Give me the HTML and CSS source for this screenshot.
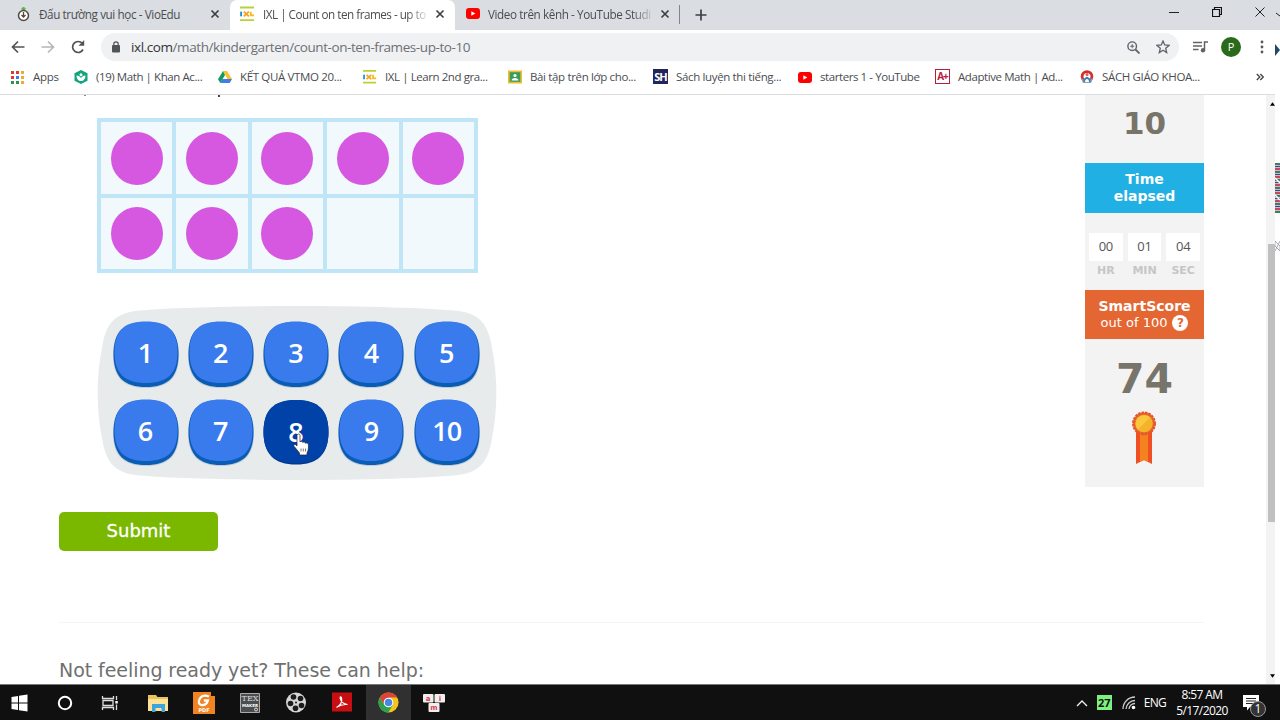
FILE: index.html
```html
<!DOCTYPE html>
<html lang="vi">
<head>
    <meta charset="UTF-8">
    <meta name="viewport" content="width=device-width, initial-scale=1.0">
    <title>IXL | Count on ten frames - up to 10</title>
    <link rel="stylesheet" href="styles.css">
</head>
<body>
    <!-- shared icons -->
    <svg class="defs" width="0" height="0">
        <symbol id="x" viewBox="0 0 10 10"><path d="M1.5 1.5l7 7M8.5 1.5l-7 7" stroke="#3c4043" stroke-width="1.7"/></symbol>
        <symbol id="ixl" viewBox="0 0 16 16">
            <path d="M0 0h15v2H0zM0 13.5h15v2H0z" fill="#b5d334"/>
            <path d="M1.2 5.500v5" stroke="#1c8fd0" stroke-width="2"/>
            <path d="M4 5.500l5.500 5M9.500 5.500L4 10.500" stroke="#f9a11b" stroke-width="2"/>
            <path d="M11.500 5.500v4h3.500" stroke="#f9b91b" stroke-width="2" fill="none"/>
        </symbol>
        <symbol id="yt" viewBox="0 0 14 12"><rect width="14" height="11" rx="3" fill="#f00"/><path d="M5.3 3.2v4.6l4-2.3z" fill="#fff"/></symbol>
        <symbol id="key" viewBox="0 0 66 68">
            <path d="M33 3C57 3 66 14 66 35C66 57 55 67 33 67S0 57 0 35C0 14 9 3 33 3z" fill="#c5cdd4"/>
            <path d="M33 1C56 1 65.500 11 65.500 33C65.500 56 55 66 33 66S.5 56 .5 33C.5 11 10 1 33 1z" fill="#0a5db5"/>
            <path d="M33 .5C55 .5 64.500 10 64.500 31C64.500 52 55 62 33 62S1.500 52 1.500 31C1.500 10 11 .5 33 .5z" fill="#397aec"/>
        </symbol>
        <symbol id="key-down" viewBox="0 0 66 68">
            <path d="M33 1C55 1 65.500 11 65.500 33C65.500 55 55 65.500 33 65.500S.5 55 .5 33C.5 11 11 1 33 1z" fill="#003a8c"/>
            <path d="M33 1C55 1 65.500 11 65.500 33C65.500 54 55 64 33 64S.5 54 .5 33C.5 11 11 1 33 1z" fill="#0142a8"/>
        </symbol>
    </svg>

    <div class="screen">
        <div class="browser">
            <div class="tabs">
                <div class="tab first">
                    <svg class="fav" viewBox="0 0 14 16"><path d="M7 1l-2 2 2 1.500L9 3z" fill="#5fb446" stroke="#5fb446"/><circle cx="7" cy="9.500" r="5" fill="#fff" stroke="#55493d" stroke-width="1.500"/><path d="M7 6v4M5 9l2 2 2-2" stroke="#55493d" stroke-width="1.300" fill="none"/></svg>
                    <span class="title t1">Đấu trường vui học - VioEdu</span>
                    <svg class="close"><use href="#x"/></svg>
                </div>
                <div class="tab active">
                    <svg class="fav"><use href="#ixl"/></svg>
                    <span class="title t2">IXL | Count on ten frames - up to</span>
                    <svg class="close"><use href="#x"/></svg>
                </div>
                <div class="tab third">
                    <svg class="fav yt"><use href="#yt"/></svg>
                    <span class="title t3">Video trên kênh - YouTube Studi</span>
                    <svg class="close"><use href="#x"/></svg>
                </div>
                <svg class="plus" viewBox="0 0 12 12"><path d="M6 .5v11M.5 6h11" stroke="#3c4043" stroke-width="1.700"/></svg>
                <div class="window-buttons">
                    <svg width="10" height="12" viewBox="0 0 10 12"><path d="M0 6.500h10" stroke="#222"/></svg>
                    <svg width="10" height="12" viewBox="0 0 10 12"><path d="M.5 3.500h7v7h-7zM2.500 3.500v-2h7v7h-2" fill="none" stroke="#111" stroke-width="1.200"/></svg>
                    <svg width="10" height="12" viewBox="0 0 10 12"><path d="M.5 1.500l9 9M9.500 1.500l-9 9" stroke="#222"/></svg>
                </div>
            </div>

            <div class="toolbar">
                <svg class="nav" viewBox="0 0 14 14"><path d="M13.500 7H1.500M7 1.500L1.500 7 7 12.500" fill="none" stroke="#505357" stroke-width="1.700"/></svg>
                <svg class="nav" viewBox="0 0 14 14"><path d="M.5 7h12M7 1.500L12.500 7 7 12.500" fill="none" stroke="#b4b6b9" stroke-width="1.600"/></svg>
                <svg class="nav" viewBox="0 0 14 14"><path d="M12 9.500A5.500 5.500 0 1 1 11.200 3.300L12 4.300" fill="none" stroke="#505357" stroke-width="1.700"/><path d="M13.200 0v5.800H7.500z" fill="#505357"/></svg>
                <div class="address">
                    <svg class="lock" viewBox="0 0 8 12"><rect y="4" width="8" height="7.500" rx="1" fill="#505357"/><path d="M1.800 4.500V3a2.200 2.200 0 0 1 4.400 0v1.500" fill="none" stroke="#505357" stroke-width="1.200"/></svg>
                    <span class="url"><b>ixl.com</b>/math/kindergarten/count-on-ten-frames-up-to-10</span>
                    <svg class="zoom" viewBox="0 0 13 13"><circle cx="5.200" cy="5.200" r="4.300" fill="none" stroke="#5f6368" stroke-width="1.400"/><path d="M8.500 8.500l4 4" stroke="#5f6368" stroke-width="1.800"/><path d="M3.200 5.200h4M5.200 3.200v4" stroke="#5f6368"/></svg>
                    <svg class="star" viewBox="0 0 14 14"><path d="M7 1l1.700 4 4.300.4-3.300 2.800 1 4.300L7 10.200l-3.700 2.300 1-4.300L1 5.400 5.300 5z" fill="none" stroke="#5f6368" stroke-width="1.300"/></svg>
                </div>
                <svg class="music" viewBox="0 0 15 12"><path d="M0 1.500h9M0 5h9M0 8.500h5.500M11.500 9V1H15" fill="none" stroke="#5f6368" stroke-width="1.500"/><circle cx="10" cy="9.300" r="2.200" fill="#5f6368"/></svg>
                <span class="avatar">P</span>
                <svg class="dots" viewBox="0 0 4 14"><circle cx="2" cy="2" r="1.400"/><circle cx="2" cy="7" r="1.400"/><circle cx="2" cy="12" r="1.400"/></svg>
            </div>

            <div class="bookmarks">
                <div class="bm b0"><svg viewBox="0 0 14 14"><path d="M1 1h3v3H1zM1 6h3v3H1z" fill="#df3a2f"/><path d="M6 1h3v3H6z" fill="#df3a2f"/><path d="M11 1h3v3h-3zM11 6h3v3h-3z" fill="#f0aa32"/><path d="M6 6h3v3H6z" fill="#3b7ee8"/><path d="M1 11h3v3H1zM6 11h3v3H6z" fill="#26964d"/><path d="M11 11h3v3h-3z" fill="#f0aa32"/></svg><span>Apps</span></div>
                <div class="bm b1"><svg viewBox="0 0 14 14"><path d="M7 0l6.500 3.300v7.400L7 14 .5 10.700V3.300z" fill="#14a37f"/><circle cx="7" cy="4.700" r="1.500" fill="#fff"/><path d="M2.500 5.500c2 0 3.500 1 4.500 2.500 1-1.500 2.500-2.500 4.500-2.500 0 3.500-2 5.500-4.500 5.500S2.500 9 2.500 5.500z" fill="#fff"/></svg><span>(19) Math | Khan Ac...</span></div>
                <div class="bm b2"><svg viewBox="0 0 14 14"><path d="M5 1h4l5 8H9.500z" fill="#fbc02d"/><path d="M5 1L0 9.300 2.300 13 7 5z" fill="#149b58"/><path d="M4.500 9H14l-2.300 4H2.300z" fill="#3f7de8"/></svg><span>KẾT QUẢ VTMO 20...</span></div>
                <div class="bm b3"><svg><use href="#ixl"/></svg><span>IXL | Learn 2nd gra...</span></div>
                <div class="bm b4"><svg viewBox="0 0 14 14"><path d="M0 .5h14v13H0z" fill="#f0bc2e"/><path d="M1.700 2.200h10.600v9.600H1.700z" fill="#379c5c"/><circle cx="7" cy="5.500" r="1.600" fill="#fff"/><path d="M3.500 10.500c0-3.500 7-3.500 7 0z" fill="#fff"/></svg><span>Bài tập trên lớp cho...</span></div>
                <div class="bm b5"><b class="sh">SH</b><span>Sách luyện thi tiếng...</span></div>
                <div class="bm b6"><svg viewBox="0 -1 14 12"><use href="#yt" width="14" height="12"/></svg><span>starters 1 - YouTube</span></div>
                <div class="bm b7"><b class="aplus">A+</b><span>Adaptive Math | Ad...</span></div>
                <div class="bm b8"><svg viewBox="0 0 14 14"><circle cx="7" cy="6.500" r="6.300" fill="#d32d2c"/><path d="M1 8l2 5h8l2-5-6 3z" fill="#8d9fb0"/><circle cx="7" cy="6.500" r="3.500" fill="#fff"/><path d="M3.500 12V9L7 6.500 10.500 9v3z" fill="#3d7eb8"/><path d="M5 12c0-4 4-4 4 0z" fill="#fff"/><circle cx="7" cy="4.500" r="1.500" fill="#e95c40"/></svg><span>SÁCH GIÁO KHOA...</span></div>
                <svg class="more" viewBox="0 0 8 8"><path d="M.8 1l3 3-3 3M4.300 1l3 3-3 3" fill="none" stroke="#444" stroke-width="1.300"/></svg>
            </div>

            <div class="page">
                <main>
                    <div class="heading-tail"><i></i><i></i></div>
                    <div class="ten-frame">
                        <div><i></i></div><div><i></i></div><div><i></i></div><div><i></i></div><div><i></i></div>
                        <div><i></i></div><div><i></i></div><div><i></i></div><div></div><div></div>
                    </div>
                    <div class="keypad">
                        <svg class="pad" viewBox="0 0 400 176"><path d="M200 1C265 1 335 3 362 6C383 9 391 20 394.500 40C401 72 401 104 394.500 136C391 156 383 167 362 170C335 173 265 175 200 175S65 173 38 170C17 167 9 156 5.500 136C-1 104-1 72 5.500 40C9 20 17 9 38 6C65 3 135 1 200 1z" fill="#e8ebec"/></svg>
                        <button><svg><use href="#key"/></svg><span>1</span></button>
                        <button><svg><use href="#key"/></svg><span>2</span></button>
                        <button><svg><use href="#key"/></svg><span>3</span></button>
                        <button><svg><use href="#key"/></svg><span>4</span></button>
                        <button><svg><use href="#key"/></svg><span>5</span></button>
                        <button><svg><use href="#key"/></svg><span>6</span></button>
                        <button><svg><use href="#key"/></svg><span>7</span></button>
                        <button class="pressed"><svg><use href="#key-down"/></svg><span>8</span>
                            <svg class="cursor" viewBox="0 0 17 23"><path d="M4 2.500C4 .5 7 .5 7 2.500V9c.5-1 2.500-.8 2.800.5.8-.8 2.400-.5 2.700.8.900-.6 2.700-.2 2.900 1.200.2 3 .1 6-1.400 8.500V22H6.500v-2C4.500 17.500 3 15.500 1 13.300.2 12 1.500 10.800 2.800 11.700L4 13z" fill="#fff" stroke="#223" stroke-width=".7"/><path d="M8 15.500v3M10.300 15.500v3M12.500 15.500v3" stroke="#222" stroke-width=".6"/></svg>
                        </button>
                        <button><svg><use href="#key"/></svg><span>9</span></button>
                        <button class="ten"><svg><use href="#key"/></svg><span>10</span></button>
                    </div>
                    <button class="submit">Submit</button>
                </main>

                <aside>
                    <div class="answered">10</div>
                    <div class="label time">Time<br>elapsed</div>
                    <div class="timer">
                        <div><b>00</b><span>HR</span></div>
                        <div><b>01</b><span>MIN</span></div>
                        <div><b>04</b><span>SEC</span></div>
                    </div>
                    <div class="label smart">SmartScore<small>out of 100 <i>?</i></small></div>
                    <div class="score">74</div>
                    <svg class="ribbon" viewBox="0 0 26 54"><path d="M5 20h16v33l-8-4-8 4z" fill="#f04e23"/><path d="M9 22h8v29l-4-2-4 2z" fill="#f58220"/><circle cx="13" cy="12.500" r="11" fill="#e9642c" stroke="#e2572b" stroke-width="2" stroke-dasharray="2.500 1"/><circle cx="13" cy="12.500" r="8.800" fill="#f4b329"/><path d="M6.800 18.700A8.800 8.800 0 0 1 19.200 6.300z" fill="#fac73f"/></svg>
                </aside>

                <div class="help">Not feeling ready yet? These can help:</div>

                <div class="scrollbar">
                    <svg viewBox="0 0 6 4"><path d="M0 4l3-4 3 4z"/></svg>
                    <div class="thumb"></div>
                    <svg viewBox="0 0 6 4"><path d="M0 0l3 4 3-4z"/></svg>
                </div>
            </div>
        </div>

        <!-- sliver of the window behind -->
        <div class="behind">
            <svg viewBox="0 0 5 684" width="5" height="684">
                <path d="M0 0h5v30H0z" fill="#dadde1"/>
                <path d="M1 13l4 3" stroke="#222"/>
                <path d="M0 44l5 6-5 6z" fill="#20486d"/>
                <path d="M0 163h5v50H0z" fill="#c9b9c9"/>
                <path d="M2.500 163v50" stroke="#39805f" stroke-width="5" stroke-dasharray="2 6"/>
                <path d="M2.500 166v47" stroke="#384a86" stroke-width="5" stroke-dasharray="1 7"/>
                <path d="M2.500 168v45" stroke="#c64762" stroke-width="5" stroke-dasharray="2 6"/>
                <path d="M0 178l5 5M0 195l5 5" stroke="#fff" stroke-width="1.500"/>
                <path d="M0 241l5 5v5l-5-5zM5 241l-5 10" stroke="#889" stroke-width=".7" fill="none"/>
            </svg>
        </div>
    </div>

    <div class="taskbar">
        <svg viewBox="0 0 24 24"><path d="M4.500 6l6.500-1v6.500H4.500zM12 4.800L20.500 3.500v8H12zM4.500 12.500H11V19l-6.500-1zM12 12.500h8.500v8L12 19.200z" fill="#fff"/></svg>
        <svg viewBox="0 0 24 24"><circle cx="12" cy="12" r="6.200" fill="none" stroke="#fff" stroke-width="2"/></svg>
        <svg viewBox="0 0 24 24"><path d="M3.500 5v2.500h11V5M3.500 19v-2.500h11V19M4 9.500h10v5H4zM17.500 5v4M17.500 13.500V19" fill="none" stroke="#ddd" stroke-width="1.300"/><path d="M16.300 10h2.500v2.500h-2.500z" fill="#fff"/></svg>
        <svg viewBox="0 0 24 24"><path d="M2 4h8l1.500 2H22v14H2z" fill="#e9c35b"/><path d="M2 8h20v12H2z" fill="#fbe296"/><path d="M6 13h13v8h-3.500v-4h-6v4H6z" fill="#3ca3dc"/></svg>
        <svg viewBox="0 0 24 24"><path d="M1 1h18l4 4v18H1z" fill="#f08322"/><path d="M19 0v5h5z" fill="#111"/><path d="M17 5.500c-6-2.500-9 .5-10 4-.8 3 1 5 4 4.500 3-.3 4.300-2 4.800-4.500h-4" fill="none" stroke="#fff" stroke-width="2.300"/><text x="12" y="21" class="tiny">PDF</text></svg>
        <svg viewBox="0 0 24 24"><path d="M2.500 2.500h19v19h-19z" fill="#4b4d4f" stroke="#aaa"/><text x="12" y="10" class="tex">TEX</text><text x="12" y="16" class="tiny maker">MAKER</text><circle cx="18" cy="18.500" r="1.500" fill="none" stroke="#ddd"/></svg>
        <svg viewBox="0 0 24 24"><circle cx="12" cy="11.500" r="10" fill="#d5d5d5"/><g fill="#1b1b1b"><circle cx="9.500" cy="6" r="2.800"/><circle cx="16.500" cy="7.500" r="2.800"/><circle cx="6.500" cy="12.500" r="2.800"/><circle cx="11.500" cy="17.200" r="2.800"/><circle cx="17.500" cy="14.500" r="2.800"/><circle cx="12" cy="11.500" r="1"/></g></svg>
        <svg viewBox="0 0 24 24"><path d="M2 1.500h20v19H2z" fill="#c90e12"/><path d="M6.500 16.500c4-2 6-6 5-9.500-.3-1.500-1.600-1.500-1.300.3.800 3.500 3.300 5.700 7.300 6.200M7 16c3-2 6.500-3 10.500-2.500" fill="none" stroke="#fff" stroke-width="1.200"/></svg>
        <div class="running"><svg viewBox="0 0 24 24"><circle cx="12" cy="12" r="10.500" fill="#f4c51d"/><path d="M2.900 6.800A10.500 10.500 0 0 1 21.100 6.800H12L7.500 14.600z" fill="#dc4437"/><path d="M2.900 6.800A10.500 10.500 0 0 0 11.800 22.500L16.500 14.600 12 17 7.500 14.600z" fill="#2da04f"/><circle cx="12" cy="12" r="5" fill="#fff"/><circle cx="12" cy="12" r="3.900" fill="#4a86e8"/></svg></div>
        <svg class="keys" viewBox="0 0 24 24"><g fill="#f3eeee"><rect x="1" y="3" width="10.500" height="8.500" rx="1"/><rect x="12.500" y="3" width="10.500" height="8.500" rx="1"/><rect x="6.500" y="12" width="11" height="9" rx="1"/></g><g class="cap"><text x="6" y="9.500">a</text><text x="18" y="9.500">i</text><text x="12" y="19">m</text></g></svg>
        <div class="tray">
            <svg class="up" viewBox="0 0 12 8"><path d="M1 7l5-5 5 5" fill="none" stroke="#eee" stroke-width="1.400"/></svg>
            <span class="temp">27</span>
            <svg class="wifi" viewBox="0 0 14 14"><path d="M1 13A12 12 0 0 1 13 1M4 13A9 9 0 0 1 13 4.500M7 13a6 6 0 0 1 6-5.500" fill="none" stroke="#ccc" stroke-width="1.300"/><circle cx="11.500" cy="11.500" r="1.800" fill="#fff"/></svg>
            <span class="lang">ENG</span>
            <div class="clock"><span>8:57 AM</span><span>5/17/2020</span></div>
            <div class="notes">
                <svg viewBox="0 0 16 16"><path d="M0 0h16v12H7l-3 3.500V12H0z" fill="#fff"/><path d="M3 3.500h10M3 6h10M3 8.500h7" stroke="#222"/></svg>
                <span class="badge">1</span>
            </div>
        </div>
    </div>
</body>
</html>
```

FILE: styles.css
```css
* {
    box-sizing: border-box;
}
body {
    margin: 0;
    width: 1280px;
    height: 720px;
    overflow: hidden;
    background: #fff;
    font-family: "Open Sans", "Noto Sans", sans-serif;
}
svg {
    display: block;
    flex: none;
}
button {
    border: none;
    padding: 0;
    background: none;
    cursor: pointer;
}
.defs {
    position: absolute;
}
.screen {
    display: flex;
    height: 684px;
}
.browser {
    width: 1275px;
    display: flex;
    flex-direction: column;
}
.behind {
    width: 5px;
}

/* tabs */
.tabs {
    height: 30px;
    background: #dadde1;
    display: flex;
    align-items: center;
}
.tab {
    display: flex;
    align-items: center;
    height: 30px;
    padding: 0 10px 2px 0;
    color: #4a4d51;
    font-size: 11.7px;
}
.tab.first {
    width: 230px;
    padding-left: 16px;
}
.tab.active {
    width: 225px;
    padding-left: 10px;
    background: #fff;
    border-radius: 7px 7px 0 0;
}
.tab.third {
    width: 225px;
    padding-left: 11px;
    background: linear-gradient(#80868b, #80868b) right 0 top 5px / 1px 19px no-repeat;
}
.fav {
    width: 15px;
    height: 16px;
    margin-right: 8px;
}
.fav.yt {
    width: 14px;
    height: 12px;
}
.title {
    flex: 1;
    white-space: nowrap;
    margin-right: 8px;
}
.t2, .t3 {
    -webkit-mask-image: linear-gradient(to right, #000 88%, transparent 102%);
    mask-image: linear-gradient(to right, #000 88%, transparent 102%);
}
.t1 {
    letter-spacing: -0.4px;
}
.t2 {
    letter-spacing: -0.5px;
}
.t3 {
    letter-spacing: -0.4px;
}
.close {
    width: 10px;
    height: 10px;
}
.plus {
    width: 12px;
    height: 12px;
    margin-left: 15px;
    margin-top: -1px;
}
.window-buttons {
    margin-left: auto;
    margin-right: 10px;
    margin-top: -7px;
    display: flex;
    gap: 33px;
}

/* toolbar */
.toolbar {
    height: 34px;
    display: flex;
    align-items: center;
    padding: 0 11px;
}
.nav {
    width: 14px;
    height: 14px;
    margin-right: 16px;
}
.address {
    width: 1080px;
    height: 28px;
    border-radius: 14px;
    background: #f0f1f3;
    display: flex;
    align-items: center;
    padding: 0 9px 0 11px;
    font-size: 13.5px;
    color: #6c7074;
}
.lock {
    width: 8px;
    height: 12px;
    margin-right: 11px;
}
.url {
    letter-spacing: -0.42px;
}
.url b {
    font-weight: normal;
    color: #303336;
}
.zoom {
    width: 13px;
    height: 13px;
    margin-left: auto;
    margin-right: 16px;
}
.star {
    width: 14px;
    height: 14px;
}
.music {
    width: 15px;
    height: 12px;
    margin-left: 14px;
}
.avatar {
    width: 20px;
    height: 20px;
    border-radius: 50%;
    background: #2a6a1a;
    color: #fff;
    font-size: 11px;
    line-height: 20px;
    text-align: center;
    margin-left: 13px;
}
.dots {
    width: 4px;
    height: 14px;
    margin-left: 19px;
    fill: #55585c;
}

/* bookmarks */
.bookmarks {
    height: 31px;
    padding-bottom: 5px;
    border-bottom: 1px solid #dcdddf;
    display: flex;
    align-items: center;
    font-size: 11.5px;
    color: #4a4d51;
}
.bm {
    display: flex;
    align-items: center;
    gap: 8px;
    white-space: nowrap;
    letter-spacing: -0.42px;
}
.bm svg {
    width: 14px;
    height: 14px;
}
.b0 {
    width: 64px;
    margin-left: 10px;
    gap: 9px;
    letter-spacing: -0.3px;
}
.b1, .b2, .b3, .b4, .b5, .b7 {
    width: 145px;
}
.b2, .b4, .b5, .b8 {
    letter-spacing: -0.35px;
}
.b1 {
    width: 144px;
}
.b6 {
    width: 137px;
}
.b8 {
    width: 140px;
}
.sh, .aplus {
    width: 15px;
    height: 15px;
    line-height: 15px;
    text-align: center;
    font-size: 11px;
    letter-spacing: -1px;
    background: #22255a;
    color: #fff;
}
.aplus {
    line-height: 12px;
    font-size: 10px;
    background: #fff;
    color: #b51f3f;
    border: 1px solid #b51f3f;
}
.more {
    width: 8px;
    height: 8px;
    margin-left: 36px;
}

/* page */
.page {
    flex: 1;
    display: grid;
    grid-template-columns: 1026px 119px 62px 9px;
    grid-template-rows: 527px 62px;
    padding-left: 59px;
    overflow: hidden;
    font-family: "DejaVu Sans", sans-serif;
}
.heading-tail {
    height: 23px;
    display: flex;
    padding-left: 25px;
    gap: 132px;
}
.heading-tail i {
    width: 2px;
    height: 2px;
    background: #444;
}
.heading-tail i:first-child {
    height: 1px;
    background: #888;
}
.ten-frame {
    width: 381px;
    height: 155px;
    margin-left: 38px;
    padding: 4px;
    display: grid;
    grid-template-columns: repeat(5, 1fr);
    grid-template-rows: repeat(2, 1fr);
    gap: 4px;
    background: #bfe5f6;
}
.ten-frame div {
    background: #f1f9fd;
    display: flex;
    align-items: center;
    justify-content: center;
}
.ten-frame i {
    width: 52px;
    height: 53px;
    margin-top: 1px;
    border-radius: 50%;
    background: #d658e0;
}
.keypad {
    position: relative;
    width: 400px;
    height: 176px;
    margin: 32px 0 0 38px;
    padding: 16px 15px 0 15.5px;
    display: grid;
    grid-template-columns: repeat(5, 66px);
    grid-template-rows: repeat(2, 68px);
    column-gap: 9.3px;
    row-gap: 9.5px;
}
.pad {
    position: absolute;
    inset: 0;
}
.keypad button {
    position: relative;
    display: grid;
    color: #fff;
    font: 600 27px/63px "Open Sans", sans-serif;
}
.keypad button > svg:first-child {
    grid-area: 1 / 1;
    width: 66px;
    height: 68px;
}
.keypad button span {
    grid-area: 1 / 1;
    z-index: 1;
}
.keypad .pressed span {
    line-height: 66px;
}
.keypad .ten {
    letter-spacing: -1px;
}
.cursor {
    position: absolute;
    left: 30px;
    top: 34px;
    width: 17px;
    height: 23px;
    z-index: 2;
}
.submit {
    display: block;
    width: 159px;
    height: 39px;
    margin-top: 31px;
    padding-bottom: 2px;
    border-radius: 5px;
    background: #7ab800;
    color: #fff;
    font: 18px "DejaVu Sans", sans-serif;
    -webkit-text-stroke: 0.3px #fff;
}

/* score column */
aside {
    height: 392px;
    background: #f3f3f3;
    text-align: center;
}
.answered {
    height: 68px;
    line-height: 57px;
    font-size: 31px;
    font-weight: bold;
    color: #77746a;
}
.label {
    color: #fff;
    font-size: 14px;
    font-weight: bold;
    line-height: 17px;
}
.time {
    height: 50px;
    padding-top: 8px;
    background: #20b0e3;
}
.timer {
    height: 77px;
    padding: 20px 4px 0;
    display: flex;
    gap: 5px;
}
.timer div {
    flex: 1;
}
.timer b {
    display: block;
    height: 28px;
    background: #fff;
    font: 13px/27px "Open Sans", sans-serif;
    letter-spacing: -0.3px;
    color: #555;
}
.timer span {
    display: block;
    font-size: 11px;
    font-weight: bold;
    line-height: 19px;
    color: #c6c6c6;
}
.smart {
    height: 49px;
    padding-top: 8px;
    background: #e46733;
}
.smart small {
    display: flex;
    justify-content: center;
    align-items: center;
    gap: 5px;
    font-size: 13px;
    font-weight: normal;
    line-height: 16px;
}
.smart i {
    width: 16px;
    height: 16px;
    border-radius: 50%;
    background: #fff;
    color: #e46733;
    font: bold 12px/16px "DejaVu Sans", sans-serif;
}
.score {
    height: 72px;
    line-height: 80px;
    font-size: 41px;
    font-weight: bold;
    color: #77746a;
}
.ribbon {
    width: 26px;
    height: 54px;
    margin: 0 0 0 46px;
}
.help {
    grid-area: 2 / 1 / 3 / 3;
    border-top: 1px solid #f5f5f5;
    padding-top: 35px;
    font-size: 19px;
    letter-spacing: -0.06px;
    line-height: 25px;
    color: #707070;
}
.scrollbar {
    grid-area: 1 / 4 / 3 / 5;
    display: flex;
    flex-direction: column;
    align-items: flex-end;
    padding: 7px 0 6px;
    background: #f3f3f3;
}
.scrollbar svg {
    width: 5px;
    height: 4px;
}
.thumb {
    width: 7px;
    height: 278px;
    margin: 138px 0 auto;
    background: #c0c0c0;
}

/* taskbar */
.taskbar {
    height: 36px;
    background: #101010;
    border-top: 1px solid #777;
    display: flex;
    align-items: center;
    padding-left: 7px;
    color: #fff;
}
.taskbar > svg {
    width: 24px;
    height: 24px;
    margin-right: 22.2px;
}
.running {
    width: 45px;
    height: 35px;
    margin-left: -11px;
    background: #303030;
    display: flex;
    align-items: center;
    justify-content: center;
}
.running svg {
    width: 23px;
    height: 23px;
}
.taskbar > .keys {
    margin-left: 11px;
}
.tiny {
    font: bold 5px "DejaVu Sans", sans-serif;
    fill: #fff;
    text-anchor: middle;
}
.tiny.maker {
    font-size: 4px;
}
.tex {
    font: 8px "DejaVu Serif", serif;
    fill: #ddd;
    text-anchor: middle;
}
.cap {
    font: bold 7px "DejaVu Sans", sans-serif;
    fill: #d6405a;
    text-anchor: middle;
}
.tray {
    margin-left: auto;
    display: flex;
    align-items: center;
    padding-right: 11px;
}
.up {
    width: 12px;
    height: 8px;
}
.temp {
    width: 15px;
    height: 15px;
    margin-left: 9px;
    background: #7ef07e;
    color: #111;
    font: bold 11px/15px "Open Sans", sans-serif;
    text-align: center;
}
.wifi {
    width: 14px;
    height: 14px;
    margin-left: 10px;
}
.lang {
    margin-left: 8px;
    font-size: 12px;
    letter-spacing: -0.7px;
}
.clock {
    width: 52px;
    margin-left: 10px;
    font-size: 12px;
    line-height: 16px;
    letter-spacing: -0.6px;
    display: flex;
    flex-direction: column;
    align-items: center;
}
.notes {
    position: relative;
    width: 26px;
    margin-left: 15px;
}
.notes svg {
    width: 16px;
    height: 16px;
}
.badge {
    position: absolute;
    left: 7px;
    top: 6px;
    width: 16px;
    height: 16px;
    border: 1px solid #999;
    border-radius: 50%;
    background: #333;
    font-size: 12px;
    line-height: 14px;
    text-align: center;
}
```
